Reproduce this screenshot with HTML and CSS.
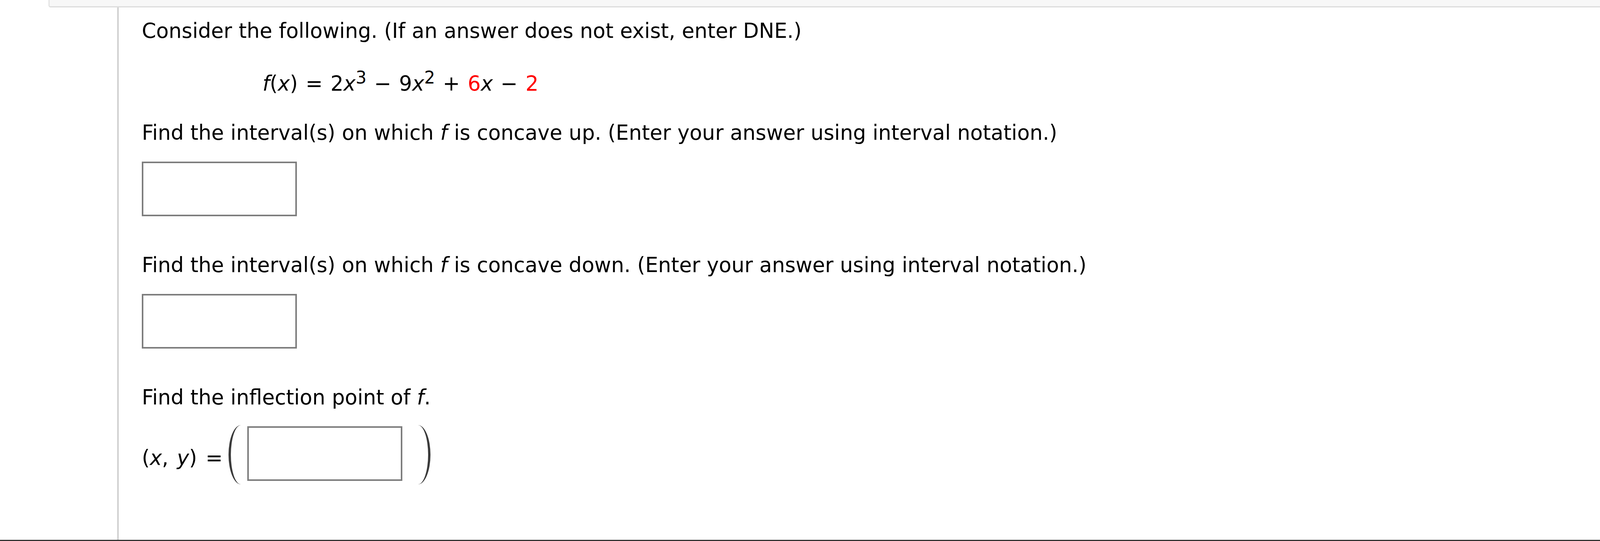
FILE: index.html
```html
<!DOCTYPE html>
<html lang="en">
<head>
    <meta charset="UTF-8">
    <title>Concavity and Inflection Points</title>
    <link rel="stylesheet" href="styles.css">
</head>
<body>
    <div class="page">
        <div class="frame">
            <div class="toolbar"></div>
            <div class="question-body">
                <div class="gutter"></div>
                <div class="question">
                    <p class="lead">Consider the following. (If an answer does not exist, enter DNE.)</p>
                    <p class="formula"><i>f</i>(<i>x</i>) = 2<i>x</i><sup>3</sup> &minus; 9<i>x</i><sup>2</sup> + <span class="rand">6</span><i>x</i> &minus; <span class="rand">2</span></p>

                    <p class="prompt first">Find the interval(s) on which <i>f</i> is concave up. (Enter your answer using interval notation.)</p>
                    <input type="text" class="answer" id="concave-up">

                    <p class="prompt">Find the interval(s) on which <i>f</i> is concave down. (Enter your answer using interval notation.)</p>
                    <input type="text" class="answer" id="concave-down">

                    <p class="prompt">Find the inflection point of <i>f</i>.</p>
                    <div class="point-row">
                        <span class="point-label">(<i>x</i>, <i>y</i>) =</span>
                        <span class="paren left"></span>
                        <input type="text" class="answer" id="inflection">
                        <span class="paren right"></span>
                    </div>
                </div>
            </div>
        </div>
    </div>
</body>
</html>
```

FILE: styles.css
```css
body {
    margin: 0;
    padding: 0;
    font-family: "DejaVu Sans", Verdana, sans-serif;
    font-size: 52.5px;
    color: #000;
    background-color: #fff;
}
.page {
    height: 1383px;
    border-bottom: 3px solid #333;
    overflow: hidden;
}
.frame {
    margin-left: 124px;
    width: 5691px;
    height: 100%;
    box-sizing: border-box;
    border-right: 5px solid #cbcbcb;
    display: flex;
    flex-direction: column;
}
.toolbar {
    height: 16px;
    flex-shrink: 0;
    background-color: #f7f7f7;
    border-left: 3px solid #e3e3e3;
    border-bottom: 3px solid #dcdcdc;
    border-bottom-left-radius: 5px;
}
.question-body {
    flex: 1;
    display: flex;
}
.gutter {
    width: 176px;
    flex-shrink: 0;
}
.question {
    flex: 1;
    border-left: 4px solid #d0d0d0;
    padding: 22px 0 0 59px;
    line-height: 75px;
}
.question p {
    margin: 0;
}
.question i {
    font-style: italic;
}
.formula {
    margin-top: 60px !important;
    padding-left: 309px;
    word-spacing: 3px;
}
.formula sup {
    line-height: 0;
}
.rand {
    color: #f00;
}
.prompt {
    margin-top: 87px !important;
}
.prompt.first {
    margin-top: 51px !important;
}
.answer {
    display: block;
    width: 397px;
    height: 140px;
    box-sizing: border-box;
    margin: 37px 0 0 0;
    padding: 0 12px;
    border: 4px solid #7d7d7d;
    background-color: #fff;
    font-family: inherit;
    font-size: 52.5px;
    outline: none;
}
.point-row {
    display: flex;
    align-items: flex-start;
    margin-top: 37px;
}
.point-row .answer {
    margin: 0;
}
.point-label {
    margin-top: 43px;
    white-space: nowrap;
    word-spacing: 5px;
}
.paren {
    width: 32px;
    height: 152px;
    flex-shrink: 0;
    box-sizing: border-box;
    margin-top: -3px;
}
.paren.left {
    margin-left: 15px;
    margin-right: 16px;
    border-left: 6px solid #3a3a3a;
    border-radius: 100% 0 0 100% / 50% 0 0 50%;
}
.paren.right {
    margin-left: 40px;
    border-right: 6px solid #3a3a3a;
    border-radius: 0 100% 100% 0 / 0 50% 50% 0;
}
```
